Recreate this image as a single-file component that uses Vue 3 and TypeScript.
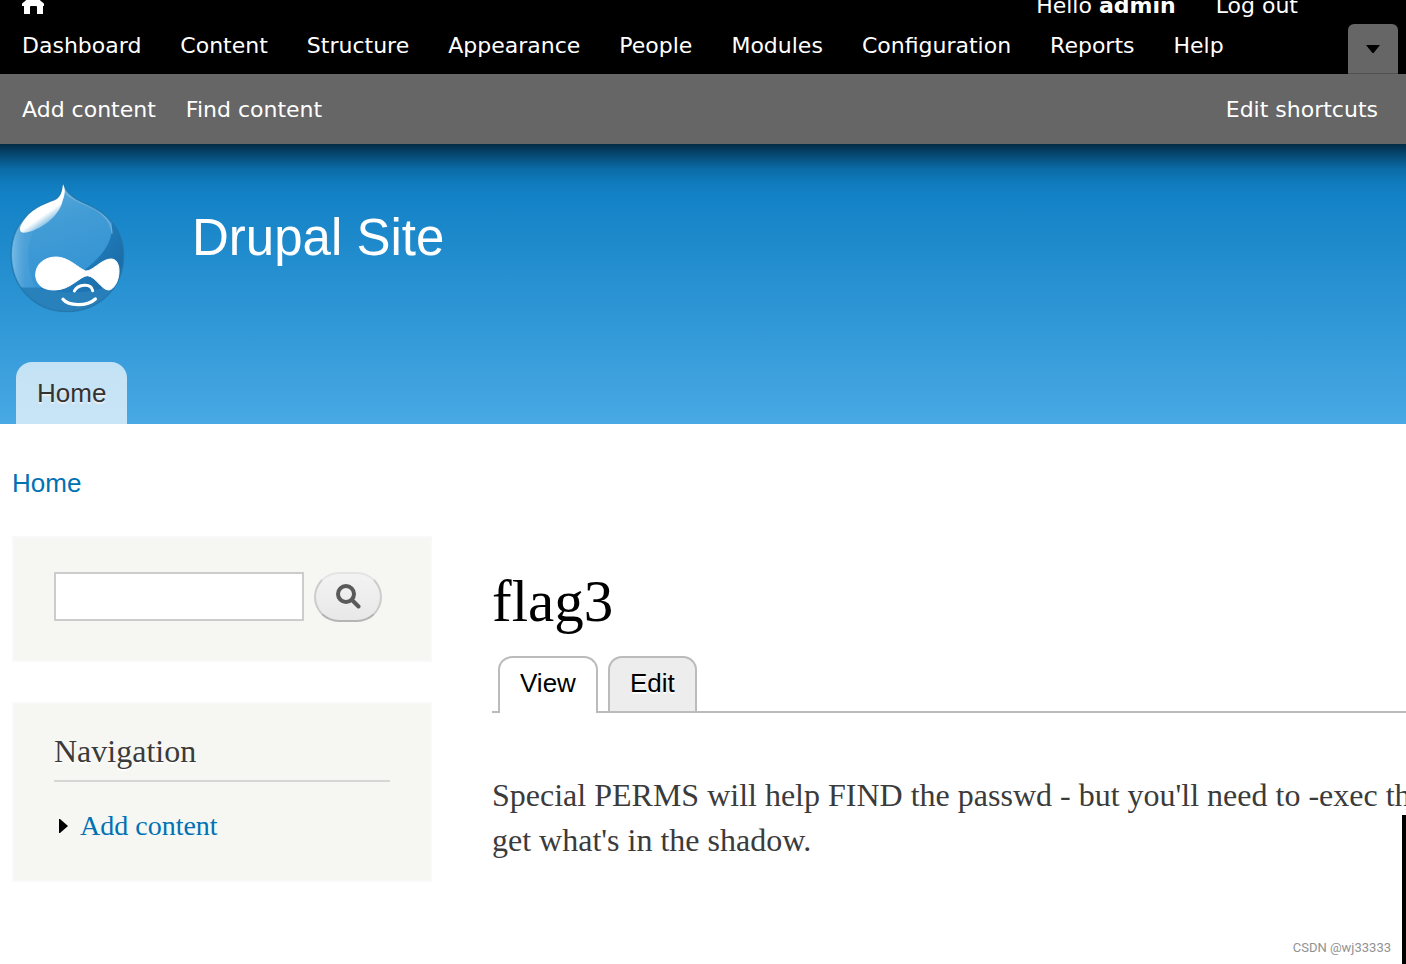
<script setup lang="ts">
import { ref } from 'vue'

const menu: string[] = [
  'Dashboard', 'Content', 'Structure', 'Appearance', 'People',
  'Modules', 'Configuration', 'Reports', 'Help',
]
const shortcuts: string[] = ['Add content', 'Find content']
const drawerOpen = ref(true)
const query = ref('')
</script>

<template>
  <div class="page">
    <div class="toolbar">
      <div class="bar">
        <div class="row account">
          <a href="#" class="house" aria-label="Home">
            <svg width="22" height="22" viewBox="0 0 22 22">
              <path d="M11 2 20 10q2 1 2 2v2h-1v8h-6v-7q0-1-1-1H9q-1 0-1 1v7H2v-8H0v-2q0-1 2-2z" fill="#fff" />
            </svg>
          </a>
          <div class="user">
            <a href="#">Hello <strong>admin</strong></a>
            <a href="#">Log out</a>
          </div>
        </div>
        <nav class="row menu" aria-label="Administration">
          <a v-for="item in menu" :key="item" href="#">{{ item }}</a>
        </nav>
        <button class="toggle" type="button" aria-label="Toggle shortcuts" :aria-expanded="drawerOpen" @click="drawerOpen = !drawerOpen">
          <svg width="16" height="10" viewBox="0 0 16 10"><path d="M1 1h14L9 8.500Q8 9.500 7 8.500z" fill="#000" /></svg>
        </button>
      </div>
      <div v-if="drawerOpen" class="drawer">
        <nav class="shortcuts" aria-label="Shortcuts">
          <a v-for="item in shortcuts" :key="item" href="#">{{ item }}</a>
        </nav>
        <a href="#">Edit shortcuts</a>
      </div>
    </div>

    <header class="header">
      <div class="brand">
        <a href="#" aria-label="Drupal Site home">
          <svg class="logo" width="115" height="130" viewBox="30 38 345 390">
            <defs>
              <linearGradient id="drop" x1="0" y1="0" x2="0.300" y2="1">
                <stop offset="0" stop-color="#5faddc" />
                <stop offset="0.400" stop-color="#419bd5" />
                <stop offset="1" stop-color="#3292d3" />
              </linearGradient>
              <linearGradient id="rim" x1="0" y1="0" x2="1" y2="0">
                <stop offset="0" stop-color="#8fc8ec" stop-opacity="0.700" />
                <stop offset="0.350" stop-color="#6ab2e0" stop-opacity="0.300" />
                <stop offset="1" stop-color="#4ea3d9" stop-opacity="0" />
              </linearGradient>
              <linearGradient id="shine" gradientUnits="userSpaceOnUse" x1="105" y1="115" x2="140" y2="165">
                <stop offset="0" stop-color="#fff" />
                <stop offset="0.500" stop-color="#fff" />
                <stop offset="1" stop-color="#fff" stop-opacity="0.250" />
              </linearGradient>
              <linearGradient id="shade" gradientUnits="userSpaceOnUse" x1="300" y1="220" x2="360" y2="260">
                <stop offset="0" stop-color="#2079b8" />
                <stop offset="1" stop-color="#1b70ab" />
              </linearGradient>
              <clipPath id="body">
                <path d="M190 39C194 59 210 74 230 87C255 101 285 110 313 133C350 164 371 205 371 254C371 354 296 424 201 424C105 424 33 350 33 253C33 197 55 154 95 123C125 99 153 96 171 82C184 72 187 57 190 39z" />
              </clipPath>
            </defs>
            <g clip-path="url(#body)">
              <rect x="30" y="38" width="345" height="390" fill="url(#drop)" />
              <path d="M36 250C36 200 54 160 90 130L145 130C85 180 65 250 105 352L66 352C45 322 36 290 36 250z" fill="url(#rim)" />
              <path d="M335 150C342 215 310 254 252 300L170 352H60L90 428H375V150z" fill="url(#shade)" />
              <path d="M60 352H110C180 375 280 370 345 340L310 428H110z" fill="#2e84be" opacity="0.700" />
              <path d="M192 55C196 80 237 93 276 112C315 132 335 155 336 190" fill="none" stroke="#8ac3e7" stroke-width="4" opacity="0.600" />
            </g>
            <path d="M190 39C194 59 210 74 230 87C255 101 285 110 313 133C350 164 371 205 371 254C371 354 296 424 201 424C105 424 33 350 33 253C33 197 55 154 95 123C125 99 153 96 171 82C184 72 187 57 190 39z" fill="none" stroke="#216f9f" stroke-width="4" opacity="0.600" />
            <path d="M189 42C196 56 197 68 187 94C179 134 121 184 69 187C58 185 57 174 65 161C89 116 132 102 168 88C183 79 186 65 189 42z" fill="url(#shine)" />
            <path d="M169 260C205 260 236 294 257 302C276 304 302 269 330 266C350 264 358 283 357 306C356 333 341 358 326 359C303 358 288 318 262 316C240 317 211 359 164 359C126 360 108 340 107 314C107 282 133 260 169 260z" fill="#fff" stroke="#fff" stroke-width="3" />
            <path d="M223 362C234 342 273 337 278 361" fill="none" stroke="#fff" stroke-width="9" stroke-linecap="round" />
            <path d="M189 387C205 407 260 410 286 386" fill="none" stroke="#fff" stroke-width="10" stroke-linecap="round" />
          </svg>
        </a>
        <a href="#" class="site-name">Drupal Site</a>
      </div>
      <nav class="main-menu" aria-label="Main menu"><a href="#">Home</a></nav>
    </header>

    <nav class="breadcrumb" aria-label="Breadcrumb"><a href="#">Home</a></nav>

    <div class="columns">
      <aside class="sidebar">
        <form class="block search" role="search" @submit.prevent>
          <input v-model="query" type="text" aria-label="Search" />
          <button type="submit" aria-label="Search">
            <svg width="26" height="26" viewBox="0 0 26 26" fill="none" stroke="#5a5a5a" stroke-linecap="round">
              <circle cx="11" cy="10" r="8" stroke-width="4" />
              <path d="M17 16l6.500 6.500" stroke-width="4" />
            </svg>
          </button>
        </form>
        <section class="block navigation">
          <h2>Navigation</h2>
          <ul>
            <li>
              <svg width="10" height="16" viewBox="0 0 10 16"><path d="M1 1h1L10 8 2 15H1z" fill="#000" /></svg>
              <a href="#">Add content</a>
            </li>
          </ul>
        </section>
      </aside>

      <main class="content">
        <h1>flag3</h1>
        <nav class="tabs" aria-label="Page tabs">
          <a href="#" class="active">View</a>
          <a href="#">Edit</a>
        </nav>
        <p>
          Special PERMS will help FIND the passwd - but you'll need to -exec th<br />
          get what's in the shadow.
        </p>
      </main>
    </div>

    <div class="edge"></div>
    <div class="credit">CSDN @wj33333</div>
  </div>
</template>

<style>
body {
  margin: 0;
  background: #fff;
}
</style>

<style scoped>
* {
  box-sizing: border-box;
}
.page {
  position: relative;
  min-height: 100vh;
  overflow: hidden;
  font-family: Georgia, "Liberation Serif", serif;
  color: #3b3b3b;
}
a {
  color: #0071b3;
  text-decoration: none;
}
.toolbar {
  font: 22px/40px "DejaVu Sans", sans-serif;
}
.toolbar a {
  color: #fff;
}
.bar {
  position: relative;
  display: flex;
  flex-direction: column;
  justify-content: flex-end;
  height: 74px;
  padding: 0 108px 8px 22px;
  overflow: hidden;
  background: #000;
}
.row {
  display: flex;
  flex-shrink: 0;
  height: 40px;
  white-space: nowrap;
}
.menu {
  gap: 39px;
}
.account {
  justify-content: space-between;
}
.house {
  display: flex;
  align-items: center;
  height: 34px;
}
.user {
  display: flex;
  gap: 40px;
}
.toggle {
  position: absolute;
  right: 8px;
  bottom: 0;
  display: flex;
  align-items: center;
  justify-content: center;
  width: 50px;
  height: 50px;
  padding: 0;
  border: 0;
  border-bottom: 1px solid #505050;
  border-radius: 6px 6px 0 0;
  background: #666;
}
.drawer {
  display: flex;
  justify-content: space-between;
  padding: 16px 28px 14px 22px;
  background: #666;
}
.shortcuts {
  display: flex;
  gap: 30px;
}
.header {
  display: flex;
  flex-direction: column;
  justify-content: space-between;
  height: 280px;
  padding: 39px 10px 0;
  background:
    linear-gradient(rgba(0, 0, 0, 0.640), rgba(0, 0, 0, 0.380) 12px, rgba(0, 0, 0, 0.140) 25px, rgba(0, 0, 0, 0.030) 40px, transparent 52px),
    linear-gradient(#0779bf, #48a9e4);
}
.brand {
  display: flex;
  gap: 67px;
}
.logo {
  display: block;
}
.site-name {
  padding-top: 25px;
  font: 51px/60px "Liberation Sans", Arial, sans-serif;
  color: #fff;
}
.main-menu {
  display: flex;
  padding-left: 6px;
  font: 26px/62px "Liberation Sans", Arial, sans-serif;
}
.main-menu a {
  padding: 0 21px;
  border-radius: 16px 16px 0 0;
  background: rgba(255, 255, 255, 0.700);
  color: #333;
  text-shadow: 0 2px 1px #eee;
}
.breadcrumb {
  padding: 40px 12px 33px;
  font: 26px/39px "Liberation Sans", Arial, sans-serif;
}
.columns {
  display: grid;
  grid-template-columns: 420px minmax(0, 1fr);
  gap: 60px;
  padding-left: 12px;
}
.sidebar {
  display: flex;
  flex-direction: column;
  gap: 40px;
}
.block {
  border: 2px solid #f9f9f9;
  background: #f6f6f2;
}
.search {
  display: flex;
  gap: 10px;
  padding: 34px 40px 38px;
}
.search input {
  width: 250px;
  height: 49px;
  padding: 4px;
  border: 2px solid #ccc;
  background: #fff;
  font: 26px "Liberation Sans", Arial, sans-serif;
}
.search button {
  display: flex;
  align-items: center;
  justify-content: center;
  width: 68px;
  height: 50px;
  padding: 0;
  border: 2px solid #ccc;
  border-top-color: #e4e4e4;
  border-bottom-color: #b4b4b4;
  border-radius: 25px;
  background: linear-gradient(#f3f3f3, #e8e8e8);
}
.navigation {
  padding: 28px 40px 32px;
}
h2 {
  margin: 0 0 22px;
  padding-bottom: 9px;
  border-bottom: 2px solid #d6d6d6;
  font-size: 32px;
  font-weight: 400;
  line-height: 39px;
  text-shadow: 0 2px 0 #fff;
}
ul {
  margin: 0;
  padding: 0 0 0 4px;
  list-style: none;
}
li {
  display: flex;
  align-items: center;
  gap: 12px;
  font-size: 28px;
  line-height: 44px;
}
.content {
  padding-top: 30px;
}
h1 {
  margin: 0 0 20px;
  color: #000;
  font-size: 59px;
  font-weight: 400;
  line-height: 70px;
}
.tabs {
  display: flex;
  gap: 10px;
  height: 57px;
  padding-left: 6px;
  border-bottom: 2px solid #bbb;
  font: 26px/51px "Liberation Sans", Arial, sans-serif;
}
.tabs a {
  height: 55px;
  padding: 0 20px;
  border: 2px solid #bbb;
  border-bottom: 0;
  border-radius: 14px 14px 0 0;
  background: #ededed;
  color: #000;
  text-shadow: 0 2px 0 #fff;
}
.tabs .active {
  height: 57px;
  background: #fff;
}
p {
  margin: 60px 0 0;
  overflow: hidden;
  font-size: 32px;
  line-height: 45px;
  white-space: nowrap;
}
.edge {
  position: absolute;
  right: 0;
  bottom: 0;
  width: 4px;
  height: 149px;
  background: #000;
}
.credit {
  position: absolute;
  right: 15px;
  bottom: 8px;
  color: #929292;
  font: 13px/16px Roboto, "Liberation Sans", sans-serif;
}
</style>
